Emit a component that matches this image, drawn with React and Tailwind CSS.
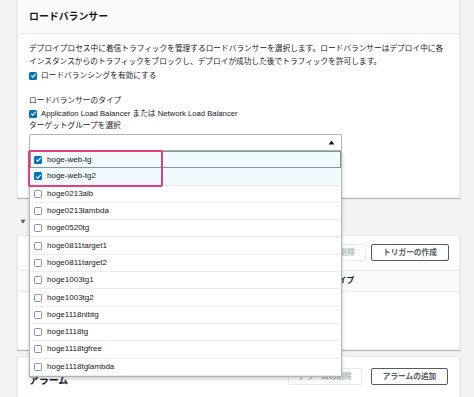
import React from "react";

const GROUPS = [
  { name: "hoge-web-tg", on: true },
  { name: "hoge-web-tg2", on: true },
  { name: "hoge0213alb" },
  { name: "hoge0213lambda" },
  { name: "hoge0520tg" },
  { name: "hoge0811target1" },
  { name: "hoge0811target2" },
  { name: "hoge1003tg1" },
  { name: "hoge1003tg2" },
  { name: "hoge1118nlbtg" },
  { name: "hoge1118tg" },
  { name: "hoge1118tgfree" },
  { name: "hoge1118tglambda" },
];

function Check({ on }) {
  if (!on) {
    return <span className="shrink-0 w-[8px] h-[8px] rounded-[1.5px] border border-[#879596] bg-white" />;
  }
  return (
    <span className="shrink-0 w-[8px] h-[8px] rounded-[1.5px] bg-[#0073bb] grid place-items-center">
      <svg viewBox="0 0 10 10" className="w-[7px] h-[7px]">
        <path d="M2 5.3 4.1 7.4 8.2 2.6" fill="none" stroke="#fff" strokeWidth="1.7" />
      </svg>
    </span>
  );
}

function Btn({ children, disabled, className = "" }) {
  return (
    <span
      className={`h-[17px] flex items-center justify-center rounded-[2px] border text-[7.7px] font-bold bg-white ${
        disabled ? "border-[#eaeded] text-[#aab7b8]" : "border-[#545b64] text-[#545b64]"
      } ${className}`}
    >
      {children}
    </span>
  );
}

const card = "bg-white border border-[#eaeded] shadow-[0_1px_1px_0_rgba(0,28,36,0.25)]";

export default function App() {
  return (
    <div className="w-[474px] h-[397px] overflow-hidden bg-[#f2f3f3] pl-[17px] text-[#16191f] font-['Liberation_Sans','Noto_Sans_CJK_JP',sans-serif]">
      {/* ロードバランサー */}
      <div className={`${card} w-[443px] -mt-px`}>
        <div className="h-[34px] bg-[#fafafa] border-b border-[#eaeded] flex items-center px-[11px] pt-px">
          <span className="text-[9.9px] font-bold">ロードバランサー</span>
        </div>
        <div className="px-[11px] pt-[8px] pb-[46px] text-[7.7px]">
          <p className="leading-[13px]">
            デプロイプロセス中に着信トラフィックを管理するロードバランサーを選択します。ロードバランサーはデプロイ中に各
            <br />
            インスタンスからのトラフィックをブロックし、デプロイが成功した後でトラフィックを許可します。
          </p>
          <div className="mt-[1px] h-[13px] flex items-center gap-[4px]">
            <Check on />
            <span>ロードバランシングを有効にする</span>
          </div>
          <p className="mt-[12px] leading-[13px]">ロードバランサーのタイプ</p>
          <div className="h-[13px] flex items-center gap-[4px]">
            <Check on />
            <span>Application Load Balancer または Network Load Balancer</span>
          </div>
          <p className="leading-[12px]">ターゲットグループを選択</p>

          <div className="relative mt-[2px] w-[313px] z-10">
            <div className="h-[17px] border border-[#aab7b8] rounded-t-[2px] bg-white flex items-center justify-end pr-[6px]">
              <svg viewBox="0 0 8 6" className="w-[7px] h-[5px]">
                <path d="M4 0.5 7.5 5.5H0.5Z" fill="#16191f" />
              </svg>
            </div>

            {/* dropdown list */}
            <div className="absolute left-0 top-full w-full bg-white border-x border-b border-[#aab7b8] shadow-[0_2px_4px_rgba(0,0,0,0.2)]">
              {GROUPS.map((g, i) => (
                <div
                  key={g.name}
                  className={`h-[17.3px] flex items-center gap-[5px] pl-[3px] text-[8px] ${
                    g.on ? "bg-[#f1faff]" : ""
                  } ${i === 0 ? "border border-[#879596]" : "border-b border-[#eaeded] mx-px"}`}
                >
                  <Check on={g.on} />
                  <span>{g.name}</span>
                </div>
              ))}
              <div className="absolute -left-[2px] -top-[1px] w-[135px] h-[37px] border-2 border-[#e2407c] rounded-[2px]" />
            </div>
          </div>
        </div>
      </div>

      {/* collapsed section */}
      <div className="mt-[17px] h-[12px] flex items-center pl-[3px]">
        <svg viewBox="0 0 8 6" className="w-[6px] h-[5px]">
          <path d="M0.5 0.5H7.5L4 5.5Z" fill="#545b64" />
        </svg>
      </div>

      {/* トリガー */}
      <div className={`${card} w-[443px] mt-[8px]`}>
        <div className="pt-[8px] pr-[10px] flex justify-end gap-[5px]">
          <Btn disabled className="w-[76px]">トリガーの削除</Btn>
          <Btn className="w-[78px]">トリガーの作成</Btn>
        </div>
        <div className="mt-[9px] h-[22px] bg-[#fafafa] border-y border-[#eaeded] flex items-center text-[7.7px] font-bold">
          <span className="pl-[313px]">タイプ</span>
        </div>
        <div className="h-[57px]" />
      </div>

      {/* アラーム */}
      <div className={`${card} w-[443px] mt-[6px] h-[60px]`}>
        <div className="pt-[11px] pl-[11px] pr-[11px] flex items-start justify-between">
          <span className="pt-[6px] leading-[13px] text-[9.9px] font-bold">アラーム</span>
          <div className="flex gap-[9px]">
            <Btn disabled className="w-[74px]">アラームの削除</Btn>
            <Btn className="w-[77px]">アラームの追加</Btn>
          </div>
        </div>
      </div>
    </div>
  );
}
